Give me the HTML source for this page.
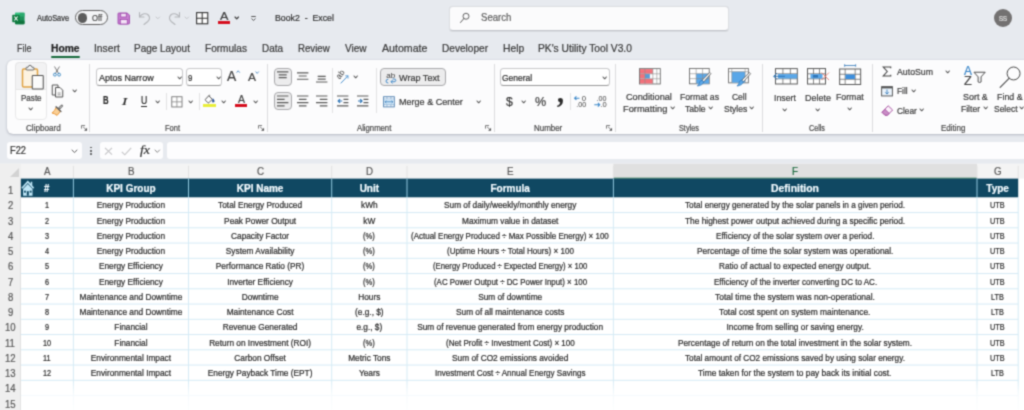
<!DOCTYPE html>
<html lang="en"><head><meta charset="utf-8"><title>Book2 - Excel</title>
<style>
html,body{margin:0;padding:0;background:#e7eaef;}
body{position:relative;width:1024px;height:410px;overflow:hidden;font-family:"Liberation Sans",sans-serif;}
#app{position:absolute;left:0;top:0;width:1040px;height:426px;overflow:hidden;background:#e7eaef;filter:url(#soft);}
.b{position:absolute;box-sizing:border-box;display:block;}
svg{overflow:visible;}
.t{-webkit-text-stroke:0.22px currentColor;position:absolute;white-space:pre;transform-origin:0 50%;display:block;}
</style></head><body><svg width="0" height="0" style="position:absolute" aria-hidden="true"><defs><filter id="soft" x="0" y="0" width="100%" height="100%" color-interpolation-filters="sRGB"><feConvolveMatrix order="3" kernelMatrix="0.090 0.300 0.090 0.300 1.000 0.300 0.090 0.300 0.090" divisor="2.560" edgeMode="duplicate" preserveAlpha="true"/></filter></defs></svg><div id="app">
<!-- title bar -->
<svg class="b" style="left:11.50px;top:11.50px;" width="13.00" height="13.00" viewBox="0 0 26 26"><rect x="6" y="1.5" width="19" height="23" rx="2" fill="#21a366"/><rect x="6" y="1.5" width="19" height="7.7" fill="#33c481"/><rect x="6" y="16.8" width="19" height="7.7" rx="2" fill="#107c41"/><rect x="15.5" y="1.5" width="9.5" height="23" fill="#185c37" opacity=".25"/><rect x="0.5" y="5.5" width="15" height="15" rx="1.6" fill="#107c41"/><path d="M4.6 9 L11.4 17 M11.4 9 L4.6 17" stroke="#fff" stroke-width="2.1" fill="none"/></svg>
<span class="t" style="left:37.20px;top:13.52px;font-size:8.30px;line-height:9.96px;color:#333;transform:scaleX(0.8891);">AutoSave</span>
<div class="b" style="left:74.50px;top:10.20px;width:33.20px;height:15.20px;border:1px solid #616161;border-radius:8px;background:#f3f4f6;"></div>
<div class="b" style="left:77.80px;top:12.90px;width:9.70px;height:9.80px;border-radius:50%;background:#5c5c5c;"></div>
<span class="t" style="left:92.10px;top:13.46px;font-size:8.40px;line-height:10.08px;color:#505050;transform:scaleX(0.9141);">Off</span>
<svg class="b" style="left:116.50px;top:11.50px;" width="13.50" height="13.00" viewBox="0 0 27 26"><path d="M2 3.5 Q2 2 3.5 2 H20.5 L25 6.5 V22.5 Q25 24 23.5 24 H3.5 Q2 24 2 22.5 Z" fill="#c77fd0" stroke="#9b3fa8" stroke-width="1.6"/><rect x="7.5" y="2.5" width="11" height="7.5" fill="#f3e3f6" stroke="#9b3fa8" stroke-width="1.5"/><rect x="6.5" y="15" width="14" height="9" fill="#f3e3f6" stroke="#9b3fa8" stroke-width="1.5"/></svg>
<svg class="b" style="left:138.00px;top:11.00px;" width="14.00" height="14.00" viewBox="0 0 28 28"><path d="M3 3 V12 H12" fill="none" stroke="#b3b5b9" stroke-width="2.2" stroke-linecap="round" stroke-linejoin="round"/><path d="M3.5 11.5 C8 5 16 3.5 20.5 8 C25 12.5 23 18 19 21.5 L12 27" fill="none" stroke="#b3b5b9" stroke-width="2.2" stroke-linecap="round"/></svg>
<svg class="b" style="left:154.70px;top:16.10px;" width="5.60" height="3.80" viewBox="-2.80 -1.90 5.60 3.80"><path d="M-1.80 -0.90 L0 0.90 L1.80 -0.90" fill="none" stroke="#c3c5c9" stroke-width="1.00" stroke-linecap="round" stroke-linejoin="round"/></svg>
<svg class="b" style="left:166.50px;top:11.00px;" width="14.00" height="14.00" viewBox="0 0 28 28"><path d="M25 3 V12 H16" fill="none" stroke="#b3b5b9" stroke-width="2.2" stroke-linecap="round" stroke-linejoin="round"/><path d="M24.5 11.5 C20 5 12 3.5 7.500 8 C3 12.5 5 18 9 21.5 L16 27" fill="none" stroke="#b3b5b9" stroke-width="2.2" stroke-linecap="round"/></svg>
<svg class="b" style="left:184.20px;top:16.10px;" width="5.60" height="3.80" viewBox="-2.80 -1.90 5.60 3.80"><path d="M-1.80 -0.90 L0 0.90 L1.80 -0.90" fill="none" stroke="#c3c5c9" stroke-width="1.00" stroke-linecap="round" stroke-linejoin="round"/></svg>
<svg class="b" style="left:196.00px;top:11.70px;" width="12.40" height="12.40" viewBox="0 0 24 24"><rect x="1.2" y="1.2" width="21.6" height="21.6" fill="#fdfdfd" stroke="#333" stroke-width="2.1"/><path d="M12 1 V23 M1 12 H23" stroke="#333" stroke-width="2"/></svg>
<span class="t" style="left:220.30px;top:9.80px;font-size:11.00px;line-height:13.20px;color:#3f3f3f;transform:scaleX(1.1448);">A</span>
<div class="b" style="left:217.80px;top:21.20px;width:12.40px;height:2.60px;background:#d60f1f;"></div>
<svg class="b" style="left:234.25px;top:15.65px;" width="5.50" height="3.90" viewBox="-2.75 -1.95 5.50 3.90"><path d="M-1.75 -0.95 L0 0.95 L1.75 -0.95" fill="none" stroke="#3a3a3a" stroke-width="1.15" stroke-linecap="round" stroke-linejoin="round"/></svg>
<svg class="b" style="left:249.50px;top:15.00px;" width="7.00" height="7.00" viewBox="0 0 14 14"><path d="M2.5 3 H11.5" stroke="#444" stroke-width="1.8"/><path d="M3 7 L7 11 L11 7" fill="none" stroke="#444" stroke-width="1.8" stroke-linejoin="round"/></svg>
<span class="t" style="left:274.50px;top:12.78px;font-size:9.20px;line-height:11.04px;color:#333;transform:scaleX(0.9536);">Book2  -  Excel</span>
<div class="b" style="left:449.20px;top:6.00px;width:279.40px;height:24.60px;background:#fbfbfc;border-radius:4px;border:1px solid #dcdee2;border-bottom-color:#c2c5cb;box-shadow:0 .5px 1px rgba(0,0,0,.07);"></div>
<svg class="b" style="left:459.00px;top:11.00px;" width="12.00" height="14.00" viewBox="0 0 24 28"><circle cx="14" cy="10.5" r="6" fill="none" stroke="#555" stroke-width="1.8"/><path d="M9.8 15 L3 23" stroke="#555" stroke-width="1.9" stroke-linecap="round"/></svg>
<span class="t" style="left:481.00px;top:12.28px;font-size:10.20px;line-height:12.24px;color:#626262;transform:scaleX(0.9437);">Search</span>
<div class="b" style="left:993.60px;top:8.90px;width:18.10px;height:18.10px;border-radius:50%;background:#737171;"></div>
<span class="t" style="left:998.60px;top:15.24px;font-size:6.60px;line-height:7.92px;color:#e4e4e4;transform:scaleX(0.9086);">SS</span>
<!-- tabs -->
<span class="t" style="left:16.50px;top:43.48px;font-size:10.20px;line-height:12.24px;color:#3b3b3b;transform:scaleX(0.8822);">File</span>
<span class="t" style="left:51.00px;top:43.48px;font-size:10.20px;line-height:12.24px;color:#1f1f1f;transform:scaleX(1.0092);font-weight:bold;">Home</span>
<span class="t" style="left:93.50px;top:43.48px;font-size:10.20px;line-height:12.24px;color:#3b3b3b;transform:scaleX(1.0114);">Insert</span>
<span class="t" style="left:134.00px;top:43.48px;font-size:10.20px;line-height:12.24px;color:#3b3b3b;transform:scaleX(0.9776);">Page Layout</span>
<span class="t" style="left:205.00px;top:43.48px;font-size:10.20px;line-height:12.24px;color:#3b3b3b;transform:scaleX(0.9880);">Formulas</span>
<span class="t" style="left:262.00px;top:43.48px;font-size:10.20px;line-height:12.24px;color:#3b3b3b;transform:scaleX(0.9747);">Data</span>
<span class="t" style="left:298.00px;top:43.48px;font-size:10.20px;line-height:12.24px;color:#3b3b3b;transform:scaleX(0.9478);">Review</span>
<span class="t" style="left:345.00px;top:43.48px;font-size:10.20px;line-height:12.24px;color:#3b3b3b;transform:scaleX(0.9852);">View</span>
<span class="t" style="left:381.50px;top:43.48px;font-size:10.20px;line-height:12.24px;color:#3b3b3b;transform:scaleX(1.0421);">Automate</span>
<span class="t" style="left:441.50px;top:43.48px;font-size:10.20px;line-height:12.24px;color:#3b3b3b;transform:scaleX(0.9915);">Developer</span>
<span class="t" style="left:502.50px;top:43.48px;font-size:10.20px;line-height:12.24px;color:#3b3b3b;transform:scaleX(1.0153);">Help</span>
<span class="t" style="left:538.00px;top:43.48px;font-size:10.20px;line-height:12.24px;color:#3b3b3b;transform:scaleX(1.0043);">PK&#x27;s Utility Tool V3.0</span>
<div class="b" style="left:51.20px;top:55.60px;width:28.50px;height:2.00px;background:#176a3c;border-radius:1px;"></div>
<!-- ribbon -->
<div class="b" style="left:6.50px;top:60.20px;width:1033.50px;height:74.10px;background:#fcfcfd;border-radius:6px;box-shadow:0 1px 2.5px rgba(60,70,90,.28),0 0 1px rgba(60,70,90,.25);"></div>
<div class="b" style="left:15.40px;top:62.00px;width:31.30px;height:58.20px;border:1px solid #e9e9ea;border-radius:4px;background:#fdfdfd;"></div>
<div class="b" style="left:15.40px;top:62.00px;width:31.30px;height:28.00px;border:1px solid #e6e6e7;border-radius:4px 4px 0 0;background:#f2f2f3;"></div>
<svg class="b" style="left:21.00px;top:64.50px;" width="23.50" height="25.50" viewBox="0 0 47 51"><rect x="3" y="8" width="30" height="36" rx="2.5" fill="#fdf3e1" stroke="#e0a243" stroke-width="3"/><path d="M10 8 V6 Q10 4.5 11.5 4.5 H14 Q15 0.500 18 0.500 Q21 0.500 22 4.5 H24.5 Q26 4.5 26 6 V8 Q26 10 24 10 H12 Q10 10 10 8 Z" fill="#f4f4f4" stroke="#6a6a6a" stroke-width="2"/><rect x="22.5" y="21" width="22" height="27" rx="1.5" fill="#fbfbfb" stroke="#555" stroke-width="2.1"/></svg>
<span class="t" style="left:20.60px;top:91.80px;font-size:9.50px;line-height:11.40px;color:#3a3a3a;transform:scaleX(0.8480);">Paste</span>
<svg class="b" style="left:28.10px;top:107.20px;" width="5.40" height="3.80" viewBox="-2.70 -1.90 5.40 3.80"><path d="M-1.70 -0.90 L0 0.90 L1.70 -0.90" fill="none" stroke="#505050" stroke-width="1.05" stroke-linecap="round" stroke-linejoin="round"/></svg>
<svg class="b" style="left:53.20px;top:66.40px;" width="8.00" height="11.40" viewBox="0 0 19 25"><path d="M4 1 L13.5 17 M15 1 L5.500 17" stroke="#4a4a4a" stroke-width="1.7" fill="none" stroke-linecap="round"/><circle cx="4.500" cy="19.500" r="3.400" fill="none" stroke="#3d8ac4" stroke-width="2.300"/><circle cx="14.500" cy="19.500" r="3.400" fill="none" stroke="#3d8ac4" stroke-width="2.300"/></svg>
<svg class="b" style="left:50.50px;top:83.50px;" width="13.00" height="14.00" viewBox="0 0 26 28"><path d="M8 22 H2.5 V2 H14 V6" fill="none" stroke="#555" stroke-width="2"/><path d="M9 7 H18 L23.5 12.5 V26 H9 Z" fill="#fbfbfb" stroke="#555" stroke-width="2"/><path d="M13 18 H19.5 M13 21.5 H19.5" stroke="#777" stroke-width="1.4"/></svg>
<svg class="b" style="left:72.10px;top:88.90px;" width="5.40" height="3.80" viewBox="-2.70 -1.90 5.40 3.80"><path d="M-1.70 -0.90 L0 0.90 L1.70 -0.90" fill="none" stroke="#505050" stroke-width="1.05" stroke-linecap="round" stroke-linejoin="round"/></svg>
<svg class="b" style="left:51.20px;top:103.60px;" width="12.60" height="12.20" viewBox="0 0 26 25"><path d="M17.500 8.500 L22.500 3.500" stroke="#5a5a5a" stroke-width="5" stroke-linecap="round"/><path d="M17.800 8.200 L22.300 3.700" stroke="#f4f4f4" stroke-width="2" stroke-linecap="round"/><path d="M11 6.500 L19.500 15 L12.500 23.500 Q8 19.500 2 18.500 Q8 14 11 6.500 Z" fill="#f9cf95" stroke="#e8912d" stroke-width="1.9" stroke-linejoin="round"/><path d="M10.500 5.500 L20.500 15.500" stroke="#5a5a5a" stroke-width="2.600" stroke-linecap="round"/></svg>
<span class="t" style="left:25.60px;top:122.56px;font-size:8.40px;line-height:10.08px;color:#4a4a4a;transform:scaleX(0.9706);">Clipboard</span>
<svg class="b" style="left:81.00px;top:125.20px;" width="6.60" height="6.20" viewBox="0 0 13 12"><path d="M1 7 V1 H8" fill="none" stroke="#555" stroke-width="1.5"/><path d="M6 11 H12 V5.5 Z" fill="#555"/><path d="M4 3.5 L9.5 8.5" stroke="#555" stroke-width="1.5"/></svg>
<div class="b" style="left:89.00px;top:64.00px;width:1.00px;height:68.00px;background:#dcdcde;"></div>
<div class="b" style="left:96.30px;top:68.30px;width:87.00px;height:18.10px;border:1px solid #c9c9cb;border-bottom-color:#9a9a9a;border-radius:3.5px;background:#fff;"></div>
<span class="t" style="left:99.00px;top:71.74px;font-size:9.60px;line-height:11.52px;color:#2b2b2b;transform:scaleX(0.9406);">Aptos Narrow</span>
<svg class="b" style="left:176.60px;top:75.60px;" width="5.40" height="3.80" viewBox="-2.70 -1.90 5.40 3.80"><path d="M-1.70 -0.90 L0 0.90 L1.70 -0.90" fill="none" stroke="#505050" stroke-width="1.05" stroke-linecap="round" stroke-linejoin="round"/></svg>
<div class="b" style="left:185.60px;top:68.30px;width:36.90px;height:18.10px;border:1px solid #c9c9cb;border-bottom-color:#9a9a9a;border-radius:3.5px;background:#fff;"></div>
<span class="t" style="left:187.80px;top:71.74px;font-size:9.60px;line-height:11.52px;color:#2b2b2b;transform:scaleX(0.8241);">9</span>
<svg class="b" style="left:215.70px;top:75.60px;" width="5.40" height="3.80" viewBox="-2.70 -1.90 5.40 3.80"><path d="M-1.70 -0.90 L0 0.90 L1.70 -0.90" fill="none" stroke="#505050" stroke-width="1.05" stroke-linecap="round" stroke-linejoin="round"/></svg>
<span class="t" style="left:227.40px;top:68.20px;font-size:14.00px;line-height:16.80px;color:#444;transform:scaleX(0.9852);">A</span>
<svg class="b" style="left:235.60px;top:70.40px;" width="4.40" height="3.20" viewBox="0 0 8 6"><path d="M1 5 L4 1.500 L7 5" fill="none" stroke="#2e75b6" stroke-width="1.4"/></svg>
<span class="t" style="left:248.00px;top:70.80px;font-size:11.50px;line-height:13.80px;color:#444;transform:scaleX(1.0429);">A</span>
<svg class="b" style="left:254.60px;top:71.40px;" width="4.40" height="3.20" viewBox="0 0 8 6"><path d="M1 1 L4 4.500 L7 1" fill="none" stroke="#2e75b6" stroke-width="1.4"/></svg>
<span class="t" style="left:102.60px;top:95.28px;font-size:10.20px;line-height:12.24px;color:#2b2b2b;transform:scaleX(0.7602);font-weight:bold;">B</span>
<span class="t" style="left:122.40px;top:94.56px;font-size:11.40px;line-height:13.68px;color:#2b2b2b;transform:scaleX(1.3696);font-style:italic;font-family:'Liberation Serif',serif;">I</span>
<span class="t" style="left:141.00px;top:95.20px;font-size:10.00px;line-height:12.00px;color:#2b2b2b;transform:scaleX(0.8723);">U</span>
<div class="b" style="left:141.00px;top:105.60px;width:6.30px;height:0.90px;background:#2b2b2b;"></div>
<svg class="b" style="left:155.30px;top:99.70px;" width="5.40" height="3.80" viewBox="-2.70 -1.90 5.40 3.80"><path d="M-1.70 -0.90 L0 0.90 L1.70 -0.90" fill="none" stroke="#505050" stroke-width="1.05" stroke-linecap="round" stroke-linejoin="round"/></svg>
<div class="b" style="left:165.90px;top:93.00px;width:1.00px;height:17.00px;background:#e2e2e4;"></div>
<svg class="b" style="left:171.00px;top:95.70px;" width="11.80" height="11.70" viewBox="0 0 24 24"><rect x="1.500" y="1.500" width="21" height="21" fill="#fff" stroke="#777" stroke-width="1.9"/><path d="M12 1.500 V22.5 M1.500 12 H22.5" stroke="#8a8a8a" stroke-width="1.7"/></svg>
<svg class="b" style="left:188.30px;top:99.70px;" width="5.40" height="3.80" viewBox="-2.70 -1.90 5.40 3.80"><path d="M-1.70 -0.90 L0 0.90 L1.70 -0.90" fill="none" stroke="#505050" stroke-width="1.05" stroke-linecap="round" stroke-linejoin="round"/></svg>
<div class="b" style="left:198.80px;top:93.00px;width:1.00px;height:17.00px;background:#e2e2e4;"></div>
<svg class="b" style="left:204.00px;top:94.00px;" width="12.00" height="11.00" viewBox="0 0 24 22"><path d="M9.500 3.500 L16.500 10.500 L9.800 17.500 Q8.800 18.300 7.800 17.500 L3 12.500 Q2.200 11.500 3 10.500 Z" fill="#fdfdfd" stroke="#505050" stroke-width="1.900" stroke-linejoin="round"/><path d="M9.500 3.500 Q10.500 0.800 12.500 3" fill="none" stroke="#505050" stroke-width="1.500"/><path d="M17.800 8.500 Q22.500 13.500 20.500 16.200 Q18.500 18 16.300 16 Q15 13.500 17.800 8.500 Z" fill="#2f5597"/></svg>
<div class="b" style="left:203.10px;top:104.40px;width:13.40px;height:3.00px;background:#e9ee3a;"></div>
<svg class="b" style="left:221.30px;top:99.70px;" width="5.40" height="3.80" viewBox="-2.70 -1.90 5.40 3.80"><path d="M-1.70 -0.90 L0 0.90 L1.70 -0.90" fill="none" stroke="#505050" stroke-width="1.05" stroke-linecap="round" stroke-linejoin="round"/></svg>
<span class="t" style="left:237.80px;top:93.06px;font-size:11.40px;line-height:13.68px;color:#444;transform:scaleX(0.9205);">A</span>
<div class="b" style="left:234.80px;top:104.40px;width:12.50px;height:3.00px;background:#d60f1f;"></div>
<svg class="b" style="left:252.60px;top:99.70px;" width="5.40" height="3.80" viewBox="-2.70 -1.90 5.40 3.80"><path d="M-1.70 -0.90 L0 0.90 L1.70 -0.90" fill="none" stroke="#505050" stroke-width="1.05" stroke-linecap="round" stroke-linejoin="round"/></svg>
<span class="t" style="left:165.00px;top:122.56px;font-size:8.40px;line-height:10.08px;color:#4a4a4a;transform:scaleX(0.8924);">Font</span>
<svg class="b" style="left:258.40px;top:125.20px;" width="6.60" height="6.20" viewBox="0 0 13 12"><path d="M1 7 V1 H8" fill="none" stroke="#555" stroke-width="1.5"/><path d="M6 11 H12 V5.5 Z" fill="#555"/><path d="M4 3.5 L9.5 8.5" stroke="#555" stroke-width="1.5"/></svg>
<div class="b" style="left:267.10px;top:64.00px;width:1.00px;height:68.00px;background:#dcdcde;"></div>
<div class="b" style="left:273.80px;top:68.20px;width:17.80px;height:18.10px;border:1.1px solid #a9a9ab;border-radius:4px;background:#ececed;"></div>
<div class="b" style="left:273.80px;top:92.40px;width:17.80px;height:18.10px;border:1.1px solid #a9a9ab;border-radius:4px;background:#ececed;"></div>
<svg class="b" style="left:276.60px;top:71.20px;" width="12.00" height="12.00" viewBox="0 0 12 12"><path d="M0.00 0.80 H11.40 M1.70 3.80 H9.70 M1.70 6.60 H9.70 " stroke="#5a5a5a" stroke-width="1.15" fill="none"/></svg>
<svg class="b" style="left:296.80px;top:70.40px;" width="12.00" height="12.00" viewBox="0 0 12 12"><path d="M0.00 2.80 H11.40 M1.70 6.00 H9.70 M0.00 9.20 H11.40 " stroke="#5a5a5a" stroke-width="1.15" fill="none"/></svg>
<svg class="b" style="left:316.20px;top:71.20px;" width="12.00" height="12.00" viewBox="0 0 12 12"><path d="M1.70 5.30 H9.70 M1.70 8.10 H9.70 M0.00 11.00 H11.40 " stroke="#5a5a5a" stroke-width="1.15" fill="none"/></svg>
<svg class="b" style="left:276.90px;top:95.00px;" width="12.00" height="12.00" viewBox="0 0 12 12"><path d="M0.00 1.00 H11.40 M0.00 4.30 H7.60 M0.00 7.60 H11.40 M0.00 10.90 H7.60 " stroke="#5a5a5a" stroke-width="1.15" fill="none"/></svg>
<svg class="b" style="left:296.80px;top:95.00px;" width="12.00" height="12.00" viewBox="0 0 12 12"><path d="M0.00 1.00 H11.40 M1.90 4.30 H9.50 M0.00 7.60 H11.40 M1.90 10.90 H9.50 " stroke="#5a5a5a" stroke-width="1.15" fill="none"/></svg>
<svg class="b" style="left:316.20px;top:95.00px;" width="12.00" height="12.00" viewBox="0 0 12 12"><path d="M0.00 1.00 H11.40 M3.80 4.30 H11.40 M0.00 7.60 H11.40 M3.80 10.90 H11.40 " stroke="#5a5a5a" stroke-width="1.15" fill="none"/></svg>
<div class="b" style="left:332.30px;top:68.00px;width:1.00px;height:45.00px;background:#e2e2e4;"></div>
<svg class="b" style="left:336.40px;top:69.60px;" width="13.00" height="13.60" viewBox="0 0 26 27"><path d="M10 26 L23.500 12" stroke="#4f94d0" stroke-width="2" stroke-linecap="round"/><path d="M18.500 11.500 L24 11.500 L24 17" fill="none" stroke="#4f94d0" stroke-width="1.700"/><text x="0" y="0" font-family="Liberation Sans, sans-serif" font-size="16.500" fill="#3a3a3a" transform="translate(7.500 19.500) rotate(-55)">ab</text></svg>
<svg class="b" style="left:353.20px;top:74.60px;" width="5.40" height="3.80" viewBox="-2.70 -1.90 5.40 3.80"><path d="M-1.70 -0.90 L0 0.90 L1.70 -0.90" fill="none" stroke="#505050" stroke-width="1.05" stroke-linecap="round" stroke-linejoin="round"/></svg>
<svg class="b" style="left:337.00px;top:95.00px;" width="12.00" height="12.00" viewBox="0 0 12 12"><path d="M0 1 H11.4 M6.500 4.300 H11.4 M6.500 7.600 H11.4 M0 10.900 H11.4" stroke="#5a5a5a" stroke-width="1.15" fill="none"/><path d="M1.2 6 H5.2 M3 4.200 L1.200 6 L3 7.800" stroke="#2e75b6" stroke-width="1.2" fill="none"/></svg>
<svg class="b" style="left:356.60px;top:95.00px;" width="12.00" height="12.00" viewBox="0 0 12 12"><path d="M0 1 H11.4 M6.500 4.300 H11.4 M6.500 7.600 H11.4 M0 10.900 H11.4" stroke="#5a5a5a" stroke-width="1.15" fill="none"/><path d="M1 6 H5 M3.2 4.200 L5 6 L3.200 7.800" stroke="#2e75b6" stroke-width="1.2" fill="none"/></svg>
<div class="b" style="left:375.90px;top:68.00px;width:1.00px;height:45.00px;background:#e2e2e4;"></div>
<div class="b" style="left:380.40px;top:68.20px;width:65.60px;height:18.10px;border:1.1px solid #a9a9ab;border-radius:4px;background:#ececed;"></div>
<svg class="b" style="left:384.60px;top:71.60px;" width="11.60" height="12.00" viewBox="0 0 23 24"><text x="2.500" y="11" font-family="Liberation Sans, sans-serif" font-size="15.5" fill="#3f3f3f" textLength="18" lengthAdjust="spacingAndGlyphs">ab</text><path d="M6.500 14.500 Q2 14.500 2 18.200 Q2 22 6.500 22" fill="none" stroke="#3a86c8" stroke-width="1.9"/><path d="M12 19.500 H18 Q21.500 19.500 21.500 16.700 Q21.500 14 18 14 H15" fill="none" stroke="#3a86c8" stroke-width="1.9"/><path d="M15 16.200 L11.700 19.500 L15 22.800" fill="none" stroke="#3a86c8" stroke-width="1.9"/></svg>
<span class="t" style="left:398.90px;top:71.72px;font-size:9.80px;line-height:11.76px;color:#3a3a3a;transform:scaleX(0.9256);">Wrap Text</span>
<svg class="b" style="left:383.30px;top:95.60px;" width="11.90" height="11.60" viewBox="0 0 24 23"><rect x="1.200" y="1.200" width="21.6" height="20.6" fill="#f4f9fd" stroke="#4f7fae" stroke-width="1.8"/><path d="M1 6 H23 M1 17 H23 M8 1 V6 M16 1 V6 M8 17 V22 M16 17 V22" stroke="#6f9cc6" stroke-width="1.3"/><rect x="2.200" y="6.700" width="19.6" height="9.600" fill="#cfe6f8"/><path d="M4 11.500 H20 M6.500 9 L4 11.500 L6.500 14 M17.500 9 L20 11.500 L17.500 14" stroke="#2e75b6" stroke-width="1.5" fill="none"/></svg>
<span class="t" style="left:398.90px;top:95.72px;font-size:9.80px;line-height:11.76px;color:#3a3a3a;transform:scaleX(0.9237);">Merge &amp; Center</span>
<svg class="b" style="left:475.50px;top:99.90px;" width="5.40" height="3.80" viewBox="-2.70 -1.90 5.40 3.80"><path d="M-1.70 -0.90 L0 0.90 L1.70 -0.90" fill="none" stroke="#505050" stroke-width="1.05" stroke-linecap="round" stroke-linejoin="round"/></svg>
<span class="t" style="left:357.30px;top:122.56px;font-size:8.40px;line-height:10.08px;color:#4a4a4a;transform:scaleX(0.9209);">Alignment</span>
<svg class="b" style="left:485.00px;top:125.20px;" width="6.60" height="6.20" viewBox="0 0 13 12"><path d="M1 7 V1 H8" fill="none" stroke="#555" stroke-width="1.5"/><path d="M6 11 H12 V5.5 Z" fill="#555"/><path d="M4 3.5 L9.5 8.5" stroke="#555" stroke-width="1.5"/></svg>
<div class="b" style="left:493.70px;top:64.00px;width:1.00px;height:68.00px;background:#dcdcde;"></div>
<div class="b" style="left:500.00px;top:68.30px;width:109.50px;height:18.10px;border:1px solid #c9c9cb;border-bottom-color:#9a9a9a;border-radius:3.5px;background:#fff;"></div>
<span class="t" style="left:502.20px;top:71.84px;font-size:9.60px;line-height:11.52px;color:#2b2b2b;transform:scaleX(0.8813);">General</span>
<svg class="b" style="left:601.70px;top:75.60px;" width="5.40" height="3.80" viewBox="-2.70 -1.90 5.40 3.80"><path d="M-1.70 -0.90 L0 0.90 L1.70 -0.90" fill="none" stroke="#505050" stroke-width="1.05" stroke-linecap="round" stroke-linejoin="round"/></svg>
<span class="t" style="left:505.80px;top:94.58px;font-size:12.20px;line-height:14.64px;color:#3a3a3a;transform:scaleX(1.0022);">$</span>
<svg class="b" style="left:520.70px;top:99.90px;" width="5.40" height="3.80" viewBox="-2.70 -1.90 5.40 3.80"><path d="M-1.70 -0.90 L0 0.90 L1.70 -0.90" fill="none" stroke="#505050" stroke-width="1.05" stroke-linecap="round" stroke-linejoin="round"/></svg>
<span class="t" style="left:534.80px;top:93.54px;font-size:13.60px;line-height:16.32px;color:#3f3f3f;transform:scaleX(0.9262);">%</span>
<span class="t" style="left:557.00px;top:74.20px;font-size:30.00px;line-height:36.00px;color:#2b2b2b;transform:scaleX(0.9333);font-weight:bold;font-family:'Liberation Serif',serif;">,</span>
<div class="b" style="left:569.50px;top:93.00px;width:1.00px;height:17.00px;background:#e2e2e4;"></div>
<svg class="b" style="left:574.40px;top:95.20px;" width="12.60" height="12.60" viewBox="0 0 22 22"><path d="M1 5.500 H9.500 M4.200 2.300 L1 5.500 L4.200 8.700" fill="none" stroke="#3a86c8" stroke-width="1.8"/><text x="13.500" y="10" font-size="13.5" font-family="Liberation Sans, sans-serif" fill="#3f3f3f">0</text><text x="4" y="21.500" font-size="13.5" font-family="Liberation Sans, sans-serif" fill="#3f3f3f" textLength="17.500" lengthAdjust="spacingAndGlyphs">.00</text></svg>
<svg class="b" style="left:594.30px;top:95.20px;" width="12.60" height="12.60" viewBox="0 0 22 22"><text x="4.500" y="10" font-size="13.5" font-family="Liberation Sans, sans-serif" fill="#3f3f3f" textLength="17.500" lengthAdjust="spacingAndGlyphs">.00</text><path d="M0.500 17 H10 M6.800 13.800 L10 17 L6.800 20.200" fill="none" stroke="#3a86c8" stroke-width="1.8"/><text x="11" y="21.500" font-size="13.5" font-family="Liberation Sans, sans-serif" fill="#3f3f3f" textLength="11" lengthAdjust="spacingAndGlyphs">.0</text></svg>
<span class="t" style="left:533.70px;top:122.56px;font-size:8.40px;line-height:10.08px;color:#4a4a4a;transform:scaleX(0.9472);">Number</span>
<svg class="b" style="left:606.00px;top:125.20px;" width="6.60" height="6.20" viewBox="0 0 13 12"><path d="M1 7 V1 H8" fill="none" stroke="#555" stroke-width="1.5"/><path d="M6 11 H12 V5.5 Z" fill="#555"/><path d="M4 3.5 L9.5 8.5" stroke="#555" stroke-width="1.5"/></svg>
<div class="b" style="left:614.60px;top:64.00px;width:1.00px;height:68.00px;background:#dcdcde;"></div>
<svg class="b" style="left:638.60px;top:68.20px;" width="21.80" height="16.60" viewBox="0 0 44 33"><rect x="1" y="1" width="42" height="31" fill="#fff" stroke="#6b6b6b" stroke-width="1.8"/><rect x="2" y="2" width="26" height="9.300" fill="#f2717b"/><rect x="2" y="12" width="10" height="9" fill="#f2717b"/><rect x="12" y="12" width="10" height="9" fill="#5b9bd5"/><rect x="2" y="21.700" width="26" height="9.300" fill="#f2717b"/><path d="M1 11.500 H43 M1 21.500 H43 M12 1 V32 M28 1 V32 M36 1 V32" stroke="#8a8a8a" stroke-width="1.200" fill="none"/></svg>
<span class="t" style="left:626.00px;top:90.92px;font-size:9.80px;line-height:11.76px;color:#3a3a3a;transform:scaleX(0.9361);">Conditional</span>
<span class="t" style="left:622.70px;top:103.12px;font-size:9.80px;line-height:11.76px;color:#3a3a3a;transform:scaleX(0.9458);">Formatting</span>
<svg class="b" style="left:669.70px;top:106.30px;" width="5.40" height="3.80" viewBox="-2.70 -1.90 5.40 3.80"><path d="M-1.70 -0.90 L0 0.90 L1.70 -0.90" fill="none" stroke="#505050" stroke-width="1.05" stroke-linecap="round" stroke-linejoin="round"/></svg>
<svg class="b" style="left:689.30px;top:68.20px;" width="22.70" height="19.80" viewBox="0 0 46 40"><rect x="1" y="1" width="40" height="31" fill="#fff" stroke="#6b6b6b" stroke-width="1.8"/><rect x="14.500" y="11.500" width="26" height="20" fill="#5aa7e8"/><path d="M1 11.500 H41 M1 21.500 H41 M14.500 1 V32 M27.500 1 V32" stroke="#8a8a8a" stroke-width="1.200" fill="none"/><path d="M42 9 L44.500 11.500 L30 28 L26.500 25 Z" fill="#fbfbfb" stroke="#555" stroke-width="1.600" stroke-linejoin="round"/><path d="M26.500 25 L30 28 Q28 35 17 36.500 Q22 32 21.500 28.500 Q23 25 26.500 25 Z" fill="#5aa7e8" stroke="#2e75b6" stroke-width="1.400"/></svg>
<span class="t" style="left:680.00px;top:90.92px;font-size:9.80px;line-height:11.76px;color:#3a3a3a;transform:scaleX(0.8841);">Format as</span>
<span class="t" style="left:685.40px;top:103.12px;font-size:9.80px;line-height:11.76px;color:#3a3a3a;transform:scaleX(0.8793);">Table</span>
<svg class="b" style="left:708.30px;top:106.30px;" width="5.40" height="3.80" viewBox="-2.70 -1.90 5.40 3.80"><path d="M-1.70 -0.90 L0 0.90 L1.70 -0.90" fill="none" stroke="#505050" stroke-width="1.05" stroke-linecap="round" stroke-linejoin="round"/></svg>
<svg class="b" style="left:728.20px;top:68.20px;" width="23.40" height="19.80" viewBox="0 0 47 40"><rect x="1" y="1" width="40" height="29" fill="#fff" stroke="#6b6b6b" stroke-width="1.8"/><rect x="7.500" y="7.500" width="27" height="22" fill="#5aa7e8"/><path d="M1 7.500 H41 M7.500 1 V30 M34.500 1 V30" stroke="#8a8a8a" stroke-width="1.200" fill="none"/><path d="M43 9 L45.500 11.500 L31 28 L27.500 25 Z" fill="#fbfbfb" stroke="#555" stroke-width="1.600" stroke-linejoin="round"/><path d="M27.500 25 L31 28 Q29 35 18 36.500 Q23 32 22.500 28.500 Q24 25 27.500 25 Z" fill="#5aa7e8" stroke="#2e75b6" stroke-width="1.400"/></svg>
<span class="t" style="left:732.30px;top:90.92px;font-size:9.80px;line-height:11.76px;color:#3a3a3a;transform:scaleX(0.8648);">Cell</span>
<span class="t" style="left:723.70px;top:103.12px;font-size:9.80px;line-height:11.76px;color:#3a3a3a;transform:scaleX(0.8693);">Styles</span>
<svg class="b" style="left:749.10px;top:106.30px;" width="5.40" height="3.80" viewBox="-2.70 -1.90 5.40 3.80"><path d="M-1.70 -0.90 L0 0.90 L1.70 -0.90" fill="none" stroke="#505050" stroke-width="1.05" stroke-linecap="round" stroke-linejoin="round"/></svg>
<span class="t" style="left:678.60px;top:122.56px;font-size:8.40px;line-height:10.08px;color:#4a4a4a;transform:scaleX(0.8699);">Styles</span>
<div class="b" style="left:762.10px;top:64.00px;width:1.00px;height:68.00px;background:#dcdcde;"></div>
<svg class="b" style="left:772.60px;top:68.20px;" width="24.80" height="16.60" viewBox="-4 0 50 33"><rect x="1" y="1" width="44" height="31" fill="#fff" stroke="#5a5a5a" stroke-width="2"/><path d="M1 11.500 H45 M1 21.500 H45 M16 1 V32 M31 1 V32" stroke="#6a6a6a" stroke-width="1.600" fill="none"/><rect x="6" y="12" width="39" height="9" fill="#5aa7e8"/><path d="M-2.500 16.500 H20 M4 10 L-2.500 16.500 L4 23" fill="none" stroke="#2e75b6" stroke-width="2" stroke-linejoin="round"/></svg>
<span class="t" style="left:774.00px;top:92.32px;font-size:9.80px;line-height:11.76px;color:#3a3a3a;transform:scaleX(0.8976);">Insert</span>
<svg class="b" style="left:781.90px;top:107.90px;" width="5.40" height="3.80" viewBox="-2.70 -1.90 5.40 3.80"><path d="M-1.70 -0.90 L0 0.90 L1.70 -0.90" fill="none" stroke="#505050" stroke-width="1.05" stroke-linecap="round" stroke-linejoin="round"/></svg>
<svg class="b" style="left:806.50px;top:68.20px;" width="23.50" height="16.60" viewBox="0 0 47 33"><rect x="1" y="1" width="36" height="31" fill="#fff" stroke="#5a5a5a" stroke-width="2"/><path d="M1 11.500 H37 M1 21.500 H37 M13 1 V32 M25 1 V32" stroke="#6a6a6a" stroke-width="1.600" fill="none"/><rect x="7" y="12" width="24" height="9" fill="#5aa7e8"/><rect x="12" y="14" width="10" height="5" fill="#2e75b6"/><path d="M29 9 L44 24 M44 9 L29 24" stroke="#e5786e" stroke-width="1.800"/></svg>
<span class="t" style="left:804.70px;top:92.32px;font-size:9.80px;line-height:11.76px;color:#3a3a3a;transform:scaleX(0.9178);">Delete</span>
<svg class="b" style="left:815.10px;top:107.90px;" width="5.40" height="3.80" viewBox="-2.70 -1.90 5.40 3.80"><path d="M-1.70 -0.90 L0 0.90 L1.70 -0.90" fill="none" stroke="#505050" stroke-width="1.05" stroke-linecap="round" stroke-linejoin="round"/></svg>
<svg class="b" style="left:839.30px;top:63.80px;" width="22.30" height="21.00" viewBox="0 0 44 42"><g transform="translate(0,9)"><rect x="1" y="1" width="42" height="31" fill="#fff" stroke="#5a5a5a" stroke-width="2"/><path d="M1 11.500 H43 M1 21.500 H43 M12 1 V32 M32 1 V32" stroke="#6a6a6a" stroke-width="1.600" fill="none"/><rect x="12.500" y="12" width="19" height="9" fill="#3d8fdd"/></g><path d="M11 3 H33 M11 0.500 V5.500 M33 0.500 V5.500" stroke="#2e75b6" stroke-width="1.600"/></svg>
<span class="t" style="left:836.20px;top:91.32px;font-size:9.80px;line-height:11.76px;color:#3a3a3a;transform:scaleX(0.8925);">Format</span>
<svg class="b" style="left:846.80px;top:106.50px;" width="5.40" height="3.80" viewBox="-2.70 -1.90 5.40 3.80"><path d="M-1.70 -0.90 L0 0.90 L1.70 -0.90" fill="none" stroke="#505050" stroke-width="1.05" stroke-linecap="round" stroke-linejoin="round"/></svg>
<span class="t" style="left:809.00px;top:122.56px;font-size:8.40px;line-height:10.08px;color:#4a4a4a;transform:scaleX(0.8569);">Cells</span>
<div class="b" style="left:871.80px;top:64.00px;width:1.00px;height:68.00px;background:#dcdcde;"></div>
<svg class="b" style="left:882.30px;top:65.80px;" width="10.00" height="11.00" viewBox="0 0 20 22"><path d="M17.500 4.500 V2 H2.500 L10.500 11 L2.500 20 H17.500 V17.500" fill="none" stroke="#444" stroke-width="2.200" stroke-linejoin="miter"/></svg>
<span class="t" style="left:897.00px;top:65.72px;font-size:9.80px;line-height:11.76px;color:#3a3a3a;transform:scaleX(0.8930);">AutoSum</span>
<svg class="b" style="left:945.30px;top:69.70px;" width="5.40" height="3.80" viewBox="-2.70 -1.90 5.40 3.80"><path d="M-1.70 -0.90 L0 0.90 L1.70 -0.90" fill="none" stroke="#505050" stroke-width="1.05" stroke-linecap="round" stroke-linejoin="round"/></svg>
<svg class="b" style="left:881.20px;top:85.60px;" width="12.00" height="10.60" viewBox="0 0 24 21"><rect x="1.200" y="1.200" width="21.600" height="18.600" fill="#eaf3fb" stroke="#555" stroke-width="1.9"/><rect x="1.200" y="1.200" width="21.600" height="3.5" fill="#555"/><path d="M12 7 V16 M8.500 12.500 L12 16 L15.500 12.500" fill="none" stroke="#2e75b6" stroke-width="1.7"/></svg>
<span class="t" style="left:897.00px;top:85.42px;font-size:9.80px;line-height:11.76px;color:#3a3a3a;transform:scaleX(0.8467);">Fill</span>
<svg class="b" style="left:911.10px;top:88.50px;" width="5.40" height="3.80" viewBox="-2.70 -1.90 5.40 3.80"><path d="M-1.70 -0.90 L0 0.90 L1.70 -0.90" fill="none" stroke="#505050" stroke-width="1.05" stroke-linecap="round" stroke-linejoin="round"/></svg>
<svg class="b" style="left:881.00px;top:104.80px;" width="12.40" height="11.00" viewBox="0 0 25 22"><path d="M14.500 1.500 L23.500 10 L13 20.500 H8 L2 14.500 Z" fill="#fbf1fa" stroke="#a0479a" stroke-width="1.800" stroke-linejoin="round"/><path d="M8 8.500 L17 17 L13 20.500 H8 L2 14.500 Z" fill="#c98cc6" stroke="#a0479a" stroke-width="1.400" stroke-linejoin="round"/></svg>
<span class="t" style="left:897.00px;top:104.52px;font-size:9.80px;line-height:11.76px;color:#3a3a3a;transform:scaleX(0.8454);">Clear</span>
<svg class="b" style="left:919.30px;top:108.00px;" width="5.40" height="3.80" viewBox="-2.70 -1.90 5.40 3.80"><path d="M-1.70 -0.90 L0 0.90 L1.70 -0.90" fill="none" stroke="#505050" stroke-width="1.05" stroke-linecap="round" stroke-linejoin="round"/></svg>
<span class="t" style="left:964.20px;top:63.76px;font-size:12.40px;line-height:14.88px;color:#3a86c8;transform:scaleX(0.9672);">A</span>
<span class="t" style="left:964.40px;top:73.42px;font-size:12.80px;line-height:15.36px;color:#444;transform:scaleX(0.9976);">Z</span>
<svg class="b" style="left:973.40px;top:70.60px;" width="13.20" height="13.20" viewBox="0 0 27 27"><path d="M2 2.500 H25 L16.500 12 V22.500 Q13.500 24.500 10.500 22.500 V12 Z" fill="none" stroke="#4a4a4a" stroke-width="2" stroke-linejoin="round"/></svg>
<span class="t" style="left:962.50px;top:90.92px;font-size:9.80px;line-height:11.76px;color:#3a3a3a;transform:scaleX(0.9107);">Sort &amp;</span>
<span class="t" style="left:961.00px;top:103.12px;font-size:9.80px;line-height:11.76px;color:#3a3a3a;transform:scaleX(0.8724);">Filter</span>
<svg class="b" style="left:983.20px;top:106.30px;" width="5.40" height="3.80" viewBox="-2.70 -1.90 5.40 3.80"><path d="M-1.70 -0.90 L0 0.90 L1.70 -0.90" fill="none" stroke="#505050" stroke-width="1.05" stroke-linecap="round" stroke-linejoin="round"/></svg>
<svg class="b" style="left:998.80px;top:65.60px;" width="22.20" height="22.40" viewBox="0 0 44 45"><circle cx="29" cy="15" r="13" fill="none" stroke="#4a4a4a" stroke-width="2"/><path d="M20 25 L2 43" stroke="#4a4a4a" stroke-width="2.200" stroke-linecap="round"/></svg>
<span class="t" style="left:997.00px;top:90.92px;font-size:9.80px;line-height:11.76px;color:#3a3a3a;transform:scaleX(0.9038);">Find &amp;</span>
<span class="t" style="left:994.00px;top:103.12px;font-size:9.80px;line-height:11.76px;color:#3a3a3a;transform:scaleX(0.8628);">Select</span>
<svg class="b" style="left:1019.10px;top:106.30px;" width="5.40" height="3.80" viewBox="-2.70 -1.90 5.40 3.80"><path d="M-1.70 -0.90 L0 0.90 L1.70 -0.90" fill="none" stroke="#505050" stroke-width="1.05" stroke-linecap="round" stroke-linejoin="round"/></svg>
<span class="t" style="left:940.60px;top:122.56px;font-size:8.40px;line-height:10.08px;color:#4a4a4a;transform:scaleX(0.9578);">Editing</span>
<!-- formula bar -->
<div class="b" style="left:7.00px;top:142.40px;width:75.00px;height:16.50px;background:#fdfdfe;border-radius:3px;"></div>
<span class="t" style="left:10.30px;top:144.58px;font-size:10.20px;line-height:12.24px;color:#333;transform:scaleX(0.9103);">F22</span>
<svg class="b" style="left:70.50px;top:148.60px;" width="7.00" height="4.60" viewBox="-3.50 -2.30 7.00 4.60"><path d="M-2.50 -1.30 L0 1.30 L2.50 -1.30" fill="none" stroke="#555" stroke-width="0.90" stroke-linecap="round" stroke-linejoin="round"/></svg>
<div class="b" style="left:89.95px;top:146.90px;width:1.60px;height:1.60px;background:#555;border-radius:50%;"></div>
<div class="b" style="left:89.95px;top:150.00px;width:1.60px;height:1.60px;background:#555;border-radius:50%;"></div>
<div class="b" style="left:89.95px;top:153.10px;width:1.60px;height:1.60px;background:#555;border-radius:50%;"></div>
<div class="b" style="left:99.50px;top:142.40px;width:63.00px;height:16.50px;background:#fdfdfe;border-radius:3px;"></div>
<svg class="b" style="left:103.50px;top:146.50px;" width="9.00" height="8.50" viewBox="0 0 9 8.500"><path d="M1 0.800 L8 7.700 M8 0.800 L1 7.700" stroke="#c4c4c6" stroke-width="1.1" fill="none"/></svg>
<svg class="b" style="left:120.50px;top:146.50px;" width="11.00" height="8.50" viewBox="0 0 11 8.500"><path d="M0.800 4.800 L3.800 7.800 L10.200 0.800" stroke="#c4c4c6" stroke-width="1.1" fill="none"/></svg>
<span class="t" style="left:140.20px;top:142.70px;font-size:12.50px;line-height:15.00px;color:#333;transform:scaleX(1.1086);font-style:italic;font-family:'Liberation Serif',serif;">fx</span>
<svg class="b" style="left:154.20px;top:148.60px;" width="6.60" height="4.40" viewBox="-3.30 -2.20 6.60 4.40"><path d="M-2.30 -1.20 L0 1.20 L2.30 -1.20" fill="none" stroke="#8a8a8a" stroke-width="1.00" stroke-linecap="round" stroke-linejoin="round"/></svg>
<div class="b" style="left:167.00px;top:142.40px;width:873.00px;height:16.50px;background:#fdfdfe;border-radius:3px;"></div>
<svg class="b" style="left:0;top:0" width="1040" height="426" viewBox="0 0 1040 426"><rect x="0.00" y="163.80" width="1040.00" height="266.20" fill="#fff" /><rect x="0.00" y="163.80" width="1040.00" height="14.80" fill="#f4f4f4" /><rect x="0.00" y="163.80" width="20.90" height="266.20" fill="#efefef" /><rect x="20.30" y="178.60" width="0.60" height="251.40" fill="#d6d6d6" /><rect x="613.40" y="163.80" width="363.60" height="14.80" fill="#e0e0e0" /><rect x="613.40" y="177.70" width="363.60" height="1.00" fill="#2a7350" /><rect x="72.90" y="165.80" width="1.00" height="12.80" fill="#e2e2e2" /><rect x="188.00" y="165.80" width="1.00" height="12.80" fill="#e2e2e2" /><rect x="331.20" y="165.80" width="1.00" height="12.80" fill="#e2e2e2" /><rect x="406.50" y="165.80" width="1.00" height="12.80" fill="#e2e2e2" /><rect x="612.90" y="165.80" width="1.00" height="12.80" fill="#e2e2e2" /><rect x="976.50" y="165.80" width="1.00" height="12.80" fill="#e2e2e2" /><rect x="1017.70" y="165.80" width="1.00" height="12.80" fill="#e2e2e2" /><rect x="20.90" y="178.60" width="997.30" height="18.70" fill="#104862" /><rect x="72.90" y="178.60" width="1.00" height="18.70" fill="#8fc6dc" /><rect x="188.00" y="178.60" width="1.00" height="18.70" fill="#8fc6dc" /><rect x="331.20" y="178.60" width="1.00" height="18.70" fill="#8fc6dc" /><rect x="406.50" y="178.60" width="1.00" height="18.70" fill="#8fc6dc" /><rect x="612.90" y="178.60" width="1.00" height="18.70" fill="#8fc6dc" /><rect x="976.50" y="178.60" width="1.00" height="18.70" fill="#8fc6dc" /><rect x="20.90" y="212.05" width="997.30" height="1.00" fill="#d5ebf6" /><rect x="20.90" y="227.30" width="997.30" height="1.00" fill="#d5ebf6" /><rect x="20.90" y="242.55" width="997.30" height="1.00" fill="#d5ebf6" /><rect x="20.90" y="257.80" width="997.30" height="1.00" fill="#d5ebf6" /><rect x="20.90" y="273.05" width="997.30" height="1.00" fill="#d5ebf6" /><rect x="20.90" y="288.30" width="997.30" height="1.00" fill="#d5ebf6" /><rect x="20.90" y="303.55" width="997.30" height="1.00" fill="#d5ebf6" /><rect x="20.90" y="318.80" width="997.30" height="1.00" fill="#d5ebf6" /><rect x="20.90" y="334.05" width="997.30" height="1.00" fill="#d5ebf6" /><rect x="20.90" y="349.30" width="997.30" height="1.00" fill="#d5ebf6" /><rect x="20.90" y="364.55" width="997.30" height="1.00" fill="#d5ebf6" /><rect x="20.90" y="379.80" width="997.30" height="1.00" fill="#d5ebf6" /><rect x="20.90" y="395.05" width="997.30" height="1.00" fill="#d5ebf6" /><rect x="20.90" y="410.30" width="997.30" height="1.00" fill="#d5ebf6" /><rect x="72.90" y="197.30" width="1.00" height="232.70" fill="#d5ebf6" /><rect x="188.00" y="197.30" width="1.00" height="232.70" fill="#d5ebf6" /><rect x="331.20" y="197.30" width="1.00" height="232.70" fill="#d5ebf6" /><rect x="406.50" y="197.30" width="1.00" height="232.70" fill="#d5ebf6" /><rect x="612.90" y="197.30" width="1.00" height="232.70" fill="#d5ebf6" /><rect x="976.50" y="197.30" width="1.00" height="232.70" fill="#d5ebf6" /><rect x="1017.70" y="197.30" width="1.00" height="232.70" fill="#d5ebf6" /><defs><linearGradient id="fade" x1="0" y1="0" x2="0" y2="1"><stop offset="0" stop-color="#fff" stop-opacity="0"/><stop offset=".45" stop-color="#fff" stop-opacity=".75"/><stop offset="1" stop-color="#fff" stop-opacity=".95"/></linearGradient></defs><rect x="20.90" y="381.00" width="1019.10" height="31.00" fill="url(#fade)" /><rect x="20.90" y="412.00" width="1019.10" height="18.00" fill="#fff" fill-opacity=".95"/></svg>
<!-- sheet -->
<svg class="b" style="left:9.50px;top:167.50px;" width="9.00" height="9.00" viewBox="0 0 9 9"><path d="M9 0 V9 H0 Z" fill="#d3d3d3"/></svg>
<span class="t" style="left:43.89px;top:165.52px;font-size:10.30px;line-height:12.36px;color:#5a5a5a;transform:scaleX(0.9500);">A</span>
<span class="t" style="left:127.69px;top:165.52px;font-size:10.30px;line-height:12.36px;color:#5a5a5a;transform:scaleX(0.9500);">B</span>
<span class="t" style="left:256.57px;top:165.52px;font-size:10.30px;line-height:12.36px;color:#5a5a5a;transform:scaleX(0.9500);">C</span>
<span class="t" style="left:365.82px;top:165.52px;font-size:10.30px;line-height:12.36px;color:#5a5a5a;transform:scaleX(0.9500);">D</span>
<span class="t" style="left:506.94px;top:165.52px;font-size:10.30px;line-height:12.36px;color:#5a5a5a;transform:scaleX(0.9500);">E</span>
<span class="t" style="left:792.21px;top:165.52px;font-size:10.30px;line-height:12.36px;color:#1e6b41;transform:scaleX(0.9500);">F</span>
<span class="t" style="left:993.79px;top:165.52px;font-size:10.30px;line-height:12.36px;color:#5a5a5a;transform:scaleX(0.9500);">G</span>
<span class="t" style="left:106.23px;top:182.94px;font-size:10.00px;line-height:12.00px;color:#f4fbff;transform:scaleX(1.0000);font-weight:bold;">KPI Group</span>
<span class="t" style="left:236.76px;top:182.94px;font-size:10.00px;line-height:12.00px;color:#f4fbff;transform:scaleX(1.0000);font-weight:bold;">KPI Name</span>
<span class="t" style="left:359.63px;top:182.94px;font-size:10.00px;line-height:12.00px;color:#f4fbff;transform:scaleX(1.0000);font-weight:bold;">Unit</span>
<span class="t" style="left:490.48px;top:182.94px;font-size:10.00px;line-height:12.00px;color:#f4fbff;transform:scaleX(1.0000);font-weight:bold;">Formula</span>
<span class="t" style="left:771.23px;top:182.94px;font-size:10.00px;line-height:12.00px;color:#f4fbff;transform:scaleX(1.0400);font-weight:bold;">Definition</span>
<span class="t" style="left:986.30px;top:182.94px;font-size:10.00px;line-height:12.00px;color:#f4fbff;transform:scaleX(1.0000);font-weight:bold;">Type</span>
<span class="t" style="left:44.24px;top:182.56px;font-size:10.40px;line-height:12.48px;color:#f4fbff;transform:scaleX(0.9200);font-weight:bold;">#</span>
<svg class="b" style="left:21.40px;top:180.20px;" width="13.60" height="16.40" viewBox="0 0 27 33"><path d="M13.500 1 L0.500 15.500 L3 17.500 L13.500 6 L24 17.500 L26.500 15.500 L22.500 11 V3.500 H19.500 V7.700 Z" fill="#bfe6f7"/><path d="M13.500 8 L4 18.200 V31.500 H23 V18.200 Z" fill="#bfe6f7"/><rect x="11.500" y="22.500" width="4" height="9" fill="#104862"/><rect x="6" y="21.500" width="3.600" height="4" fill="#104862"/><rect x="17.400" y="21.500" width="3.600" height="4" fill="#104862"/></svg>
<span class="t" style="left:7.55px;top:184.24px;font-size:10.60px;line-height:12.72px;color:#5a5a5a;transform:scaleX(0.9000);">1</span>
<span class="t" style="left:7.55px;top:199.47px;font-size:10.60px;line-height:12.72px;color:#5a5a5a;transform:scaleX(0.9000);">2</span>
<span class="t" style="left:7.55px;top:214.72px;font-size:10.60px;line-height:12.72px;color:#5a5a5a;transform:scaleX(0.9000);">3</span>
<span class="t" style="left:7.55px;top:229.97px;font-size:10.60px;line-height:12.72px;color:#5a5a5a;transform:scaleX(0.9000);">4</span>
<span class="t" style="left:7.55px;top:245.22px;font-size:10.60px;line-height:12.72px;color:#5a5a5a;transform:scaleX(0.9000);">5</span>
<span class="t" style="left:7.55px;top:260.46px;font-size:10.60px;line-height:12.72px;color:#5a5a5a;transform:scaleX(0.9000);">6</span>
<span class="t" style="left:7.55px;top:275.71px;font-size:10.60px;line-height:12.72px;color:#5a5a5a;transform:scaleX(0.9000);">7</span>
<span class="t" style="left:7.55px;top:290.96px;font-size:10.60px;line-height:12.72px;color:#5a5a5a;transform:scaleX(0.9000);">8</span>
<span class="t" style="left:7.55px;top:306.21px;font-size:10.60px;line-height:12.72px;color:#5a5a5a;transform:scaleX(0.9000);">9</span>
<span class="t" style="left:4.89px;top:321.46px;font-size:10.60px;line-height:12.72px;color:#5a5a5a;transform:scaleX(0.9000);">10</span>
<span class="t" style="left:5.25px;top:336.71px;font-size:10.60px;line-height:12.72px;color:#5a5a5a;transform:scaleX(0.9000);">11</span>
<span class="t" style="left:4.89px;top:351.96px;font-size:10.60px;line-height:12.72px;color:#5a5a5a;transform:scaleX(0.9000);">12</span>
<span class="t" style="left:4.89px;top:367.21px;font-size:10.60px;line-height:12.72px;color:#5a5a5a;transform:scaleX(0.9000);">13</span>
<span class="t" style="left:4.89px;top:382.46px;font-size:10.60px;line-height:12.72px;color:#5a5a5a;transform:scaleX(0.9000);">14</span>
<span class="t" style="left:4.89px;top:397.71px;font-size:10.60px;line-height:12.72px;color:#5a5a5a;transform:scaleX(0.9000);">15</span>
<span class="t" style="left:45.12px;top:201.44px;font-size:8.30px;line-height:9.96px;color:#2e2e2e;transform:scaleX(0.8800);-webkit-text-stroke:0.22px #2e2e2e;">1</span>
<span class="t" style="left:96.81px;top:201.44px;font-size:8.30px;line-height:9.96px;color:#2e2e2e;transform:scaleX(1.0000);-webkit-text-stroke:0.22px #2e2e2e;">Energy Production</span>
<span class="t" style="left:218.11px;top:201.44px;font-size:8.30px;line-height:9.96px;color:#2e2e2e;transform:scaleX(1.0000);-webkit-text-stroke:0.22px #2e2e2e;">Total Energy Produced</span>
<span class="t" style="left:361.05px;top:201.44px;font-size:8.30px;line-height:9.96px;color:#2e2e2e;transform:scaleX(1.0000);-webkit-text-stroke:0.22px #2e2e2e;">kWh</span>
<span class="t" style="left:444.00px;top:201.44px;font-size:8.30px;line-height:9.96px;color:#2e2e2e;transform:scaleX(1.0000);-webkit-text-stroke:0.22px #2e2e2e;">Sum of daily/weekly/monthly energy</span>
<span class="t" style="left:685.11px;top:201.44px;font-size:8.30px;line-height:9.96px;color:#2e2e2e;transform:scaleX(0.9900);-webkit-text-stroke:0.22px #2e2e2e;">Total energy generated by the solar panels in a given period.</span>
<span class="t" style="left:990.30px;top:201.44px;font-size:8.30px;line-height:9.96px;color:#2e2e2e;transform:scaleX(0.8800);-webkit-text-stroke:0.22px #2e2e2e;">UTB</span>
<span class="t" style="left:45.12px;top:216.69px;font-size:8.30px;line-height:9.96px;color:#2e2e2e;transform:scaleX(0.8800);-webkit-text-stroke:0.22px #2e2e2e;">2</span>
<span class="t" style="left:96.81px;top:216.69px;font-size:8.30px;line-height:9.96px;color:#2e2e2e;transform:scaleX(1.0000);-webkit-text-stroke:0.22px #2e2e2e;">Energy Production</span>
<span class="t" style="left:224.11px;top:216.69px;font-size:8.30px;line-height:9.96px;color:#2e2e2e;transform:scaleX(1.0000);-webkit-text-stroke:0.22px #2e2e2e;">Peak Power Output</span>
<span class="t" style="left:363.36px;top:216.69px;font-size:8.30px;line-height:9.96px;color:#2e2e2e;transform:scaleX(1.0000);-webkit-text-stroke:0.22px #2e2e2e;">kW</span>
<span class="t" style="left:461.99px;top:216.69px;font-size:8.30px;line-height:9.96px;color:#2e2e2e;transform:scaleX(1.0000);-webkit-text-stroke:0.22px #2e2e2e;">Maximum value in dataset</span>
<span class="t" style="left:685.07px;top:216.69px;font-size:8.30px;line-height:9.96px;color:#2e2e2e;transform:scaleX(1.0050);-webkit-text-stroke:0.22px #2e2e2e;">The highest power output achieved during a specific period.</span>
<span class="t" style="left:990.30px;top:216.69px;font-size:8.30px;line-height:9.96px;color:#2e2e2e;transform:scaleX(0.8800);-webkit-text-stroke:0.22px #2e2e2e;">UTB</span>
<span class="t" style="left:45.12px;top:231.94px;font-size:8.30px;line-height:9.96px;color:#2e2e2e;transform:scaleX(0.8800);-webkit-text-stroke:0.22px #2e2e2e;">3</span>
<span class="t" style="left:96.81px;top:231.94px;font-size:8.30px;line-height:9.96px;color:#2e2e2e;transform:scaleX(1.0000);-webkit-text-stroke:0.22px #2e2e2e;">Energy Production</span>
<span class="t" style="left:231.04px;top:231.94px;font-size:8.30px;line-height:9.96px;color:#2e2e2e;transform:scaleX(1.0000);-webkit-text-stroke:0.22px #2e2e2e;">Capacity Factor</span>
<span class="t" style="left:363.41px;top:231.94px;font-size:8.30px;line-height:9.96px;color:#2e2e2e;transform:scaleX(0.9200);-webkit-text-stroke:0.22px #2e2e2e;">(%)</span>
<span class="t" style="left:411.26px;top:231.94px;font-size:8.30px;line-height:9.96px;color:#2e2e2e;transform:scaleX(0.9630);-webkit-text-stroke:0.22px #2e2e2e;">(Actual Energy Produced ÷ Max Possible Energy) × 100</span>
<span class="t" style="left:715.97px;top:231.94px;font-size:8.30px;line-height:9.96px;color:#2e2e2e;transform:scaleX(0.9880);-webkit-text-stroke:0.22px #2e2e2e;">Efficiency of the solar system over a period.</span>
<span class="t" style="left:990.30px;top:231.94px;font-size:8.30px;line-height:9.96px;color:#2e2e2e;transform:scaleX(0.8800);-webkit-text-stroke:0.22px #2e2e2e;">UTB</span>
<span class="t" style="left:45.12px;top:247.19px;font-size:8.30px;line-height:9.96px;color:#2e2e2e;transform:scaleX(0.8800);-webkit-text-stroke:0.22px #2e2e2e;">4</span>
<span class="t" style="left:96.81px;top:247.19px;font-size:8.30px;line-height:9.96px;color:#2e2e2e;transform:scaleX(1.0000);-webkit-text-stroke:0.22px #2e2e2e;">Energy Production</span>
<span class="t" style="left:225.81px;top:247.19px;font-size:8.30px;line-height:9.96px;color:#2e2e2e;transform:scaleX(1.0000);-webkit-text-stroke:0.22px #2e2e2e;">System Availability</span>
<span class="t" style="left:363.41px;top:247.19px;font-size:8.30px;line-height:9.96px;color:#2e2e2e;transform:scaleX(0.9200);-webkit-text-stroke:0.22px #2e2e2e;">(%)</span>
<span class="t" style="left:446.74px;top:247.19px;font-size:8.30px;line-height:9.96px;color:#2e2e2e;transform:scaleX(0.9720);-webkit-text-stroke:0.22px #2e2e2e;">(Uptime Hours ÷ Total Hours) × 100</span>
<span class="t" style="left:696.94px;top:247.19px;font-size:8.30px;line-height:9.96px;color:#2e2e2e;transform:scaleX(1.0070);-webkit-text-stroke:0.22px #2e2e2e;">Percentage of time the solar system was operational.</span>
<span class="t" style="left:990.30px;top:247.19px;font-size:8.30px;line-height:9.96px;color:#2e2e2e;transform:scaleX(0.8800);-webkit-text-stroke:0.22px #2e2e2e;">UTB</span>
<span class="t" style="left:45.12px;top:262.44px;font-size:8.30px;line-height:9.96px;color:#2e2e2e;transform:scaleX(0.8800);-webkit-text-stroke:0.22px #2e2e2e;">5</span>
<span class="t" style="left:98.96px;top:262.44px;font-size:8.30px;line-height:9.96px;color:#2e2e2e;transform:scaleX(1.0000);-webkit-text-stroke:0.22px #2e2e2e;">Energy Efficiency</span>
<span class="t" style="left:215.82px;top:262.44px;font-size:8.30px;line-height:9.96px;color:#2e2e2e;transform:scaleX(1.0000);-webkit-text-stroke:0.22px #2e2e2e;">Performance Ratio (PR)</span>
<span class="t" style="left:363.41px;top:262.44px;font-size:8.30px;line-height:9.96px;color:#2e2e2e;transform:scaleX(0.9200);-webkit-text-stroke:0.22px #2e2e2e;">(%)</span>
<span class="t" style="left:432.98px;top:262.44px;font-size:8.30px;line-height:9.96px;color:#2e2e2e;transform:scaleX(0.9340);-webkit-text-stroke:0.22px #2e2e2e;">(Energy Produced ÷ Expected Energy) × 100</span>
<span class="t" style="left:719.14px;top:262.44px;font-size:8.30px;line-height:9.96px;color:#2e2e2e;transform:scaleX(0.9900);-webkit-text-stroke:0.22px #2e2e2e;">Ratio of actual to expected energy output.</span>
<span class="t" style="left:990.30px;top:262.44px;font-size:8.30px;line-height:9.96px;color:#2e2e2e;transform:scaleX(0.8800);-webkit-text-stroke:0.22px #2e2e2e;">UTB</span>
<span class="t" style="left:45.12px;top:277.69px;font-size:8.30px;line-height:9.96px;color:#2e2e2e;transform:scaleX(0.8800);-webkit-text-stroke:0.22px #2e2e2e;">6</span>
<span class="t" style="left:98.96px;top:277.69px;font-size:8.30px;line-height:9.96px;color:#2e2e2e;transform:scaleX(1.0000);-webkit-text-stroke:0.22px #2e2e2e;">Energy Efficiency</span>
<span class="t" style="left:227.19px;top:277.69px;font-size:8.30px;line-height:9.96px;color:#2e2e2e;transform:scaleX(1.0000);-webkit-text-stroke:0.22px #2e2e2e;">Inverter Efficiency</span>
<span class="t" style="left:363.41px;top:277.69px;font-size:8.30px;line-height:9.96px;color:#2e2e2e;transform:scaleX(0.9200);-webkit-text-stroke:0.22px #2e2e2e;">(%)</span>
<span class="t" style="left:433.64px;top:277.69px;font-size:8.30px;line-height:9.96px;color:#2e2e2e;transform:scaleX(0.9500);-webkit-text-stroke:0.22px #2e2e2e;">(AC Power Output ÷ DC Power Input) × 100</span>
<span class="t" style="left:713.61px;top:277.69px;font-size:8.30px;line-height:9.96px;color:#2e2e2e;transform:scaleX(0.9700);-webkit-text-stroke:0.22px #2e2e2e;">Efficiency of the inverter converting DC to AC.</span>
<span class="t" style="left:990.30px;top:277.69px;font-size:8.30px;line-height:9.96px;color:#2e2e2e;transform:scaleX(0.8800);-webkit-text-stroke:0.22px #2e2e2e;">UTB</span>
<span class="t" style="left:45.12px;top:292.94px;font-size:8.30px;line-height:9.96px;color:#2e2e2e;transform:scaleX(0.8800);-webkit-text-stroke:0.22px #2e2e2e;">7</span>
<span class="t" style="left:79.51px;top:292.94px;font-size:8.30px;line-height:9.96px;color:#2e2e2e;transform:scaleX(1.0000);-webkit-text-stroke:0.22px #2e2e2e;">Maintenance and Downtime</span>
<span class="t" style="left:241.65px;top:292.94px;font-size:8.30px;line-height:9.96px;color:#2e2e2e;transform:scaleX(1.0000);-webkit-text-stroke:0.22px #2e2e2e;">Downtime</span>
<span class="t" style="left:358.28px;top:292.94px;font-size:8.30px;line-height:9.96px;color:#2e2e2e;transform:scaleX(1.0000);-webkit-text-stroke:0.22px #2e2e2e;">Hours</span>
<span class="t" style="left:478.14px;top:292.94px;font-size:8.30px;line-height:9.96px;color:#2e2e2e;transform:scaleX(1.0000);-webkit-text-stroke:0.22px #2e2e2e;">Sum of downtime</span>
<span class="t" style="left:715.20px;top:292.94px;font-size:8.30px;line-height:9.96px;color:#2e2e2e;transform:scaleX(1.0170);-webkit-text-stroke:0.22px #2e2e2e;">Total time the system was non-operational.</span>
<span class="t" style="left:991.17px;top:292.94px;font-size:8.30px;line-height:9.96px;color:#2e2e2e;transform:scaleX(0.8800);-webkit-text-stroke:0.22px #2e2e2e;">LTB</span>
<span class="t" style="left:45.12px;top:308.19px;font-size:8.30px;line-height:9.96px;color:#2e2e2e;transform:scaleX(0.8800);-webkit-text-stroke:0.22px #2e2e2e;">8</span>
<span class="t" style="left:79.51px;top:308.19px;font-size:8.30px;line-height:9.96px;color:#2e2e2e;transform:scaleX(1.0000);-webkit-text-stroke:0.22px #2e2e2e;">Maintenance and Downtime</span>
<span class="t" style="left:226.65px;top:308.19px;font-size:8.30px;line-height:9.96px;color:#2e2e2e;transform:scaleX(1.0000);-webkit-text-stroke:0.22px #2e2e2e;">Maintenance Cost</span>
<span class="t" style="left:355.05px;top:308.19px;font-size:8.30px;line-height:9.96px;color:#2e2e2e;transform:scaleX(1.0000);-webkit-text-stroke:0.22px #2e2e2e;">(e.g., $)</span>
<span class="t" style="left:455.99px;top:308.19px;font-size:8.30px;line-height:9.96px;color:#2e2e2e;transform:scaleX(1.0000);-webkit-text-stroke:0.22px #2e2e2e;">Sum of all maintenance costs</span>
<span class="t" style="left:719.48px;top:308.19px;font-size:8.30px;line-height:9.96px;color:#2e2e2e;transform:scaleX(1.0100);-webkit-text-stroke:0.22px #2e2e2e;">Total cost spent on system maintenance.</span>
<span class="t" style="left:991.17px;top:308.19px;font-size:8.30px;line-height:9.96px;color:#2e2e2e;transform:scaleX(0.8800);-webkit-text-stroke:0.22px #2e2e2e;">LTB</span>
<span class="t" style="left:45.12px;top:323.44px;font-size:8.30px;line-height:9.96px;color:#2e2e2e;transform:scaleX(0.8800);-webkit-text-stroke:0.22px #2e2e2e;">9</span>
<span class="t" style="left:114.34px;top:323.44px;font-size:8.30px;line-height:9.96px;color:#2e2e2e;transform:scaleX(1.0000);-webkit-text-stroke:0.22px #2e2e2e;">Financial</span>
<span class="t" style="left:222.72px;top:323.44px;font-size:8.30px;line-height:9.96px;color:#2e2e2e;transform:scaleX(1.0000);-webkit-text-stroke:0.22px #2e2e2e;">Revenue Generated</span>
<span class="t" style="left:356.43px;top:323.44px;font-size:8.30px;line-height:9.96px;color:#2e2e2e;transform:scaleX(1.0000);-webkit-text-stroke:0.22px #2e2e2e;">e.g., $)</span>
<span class="t" style="left:417.23px;top:323.44px;font-size:8.30px;line-height:9.96px;color:#2e2e2e;transform:scaleX(1.0000);-webkit-text-stroke:0.22px #2e2e2e;">Sum of revenue generated from energy production</span>
<span class="t" style="left:726.54px;top:323.44px;font-size:8.30px;line-height:9.96px;color:#2e2e2e;transform:scaleX(1.0000);-webkit-text-stroke:0.22px #2e2e2e;">Income from selling or saving energy.</span>
<span class="t" style="left:990.30px;top:323.44px;font-size:8.30px;line-height:9.96px;color:#2e2e2e;transform:scaleX(0.8800);-webkit-text-stroke:0.22px #2e2e2e;">UTB</span>
<span class="t" style="left:43.09px;top:338.69px;font-size:8.30px;line-height:9.96px;color:#2e2e2e;transform:scaleX(0.8800);-webkit-text-stroke:0.22px #2e2e2e;">10</span>
<span class="t" style="left:114.34px;top:338.69px;font-size:8.30px;line-height:9.96px;color:#2e2e2e;transform:scaleX(1.0000);-webkit-text-stroke:0.22px #2e2e2e;">Financial</span>
<span class="t" style="left:209.13px;top:338.69px;font-size:8.30px;line-height:9.96px;color:#2e2e2e;transform:scaleX(1.0000);-webkit-text-stroke:0.22px #2e2e2e;">Return on Investment (ROI)</span>
<span class="t" style="left:363.41px;top:338.69px;font-size:8.30px;line-height:9.96px;color:#2e2e2e;transform:scaleX(0.9200);-webkit-text-stroke:0.22px #2e2e2e;">(%)</span>
<span class="t" style="left:445.77px;top:338.69px;font-size:8.30px;line-height:9.96px;color:#2e2e2e;transform:scaleX(0.9720);-webkit-text-stroke:0.22px #2e2e2e;">(Net Profit ÷ Investment Cost) × 100</span>
<span class="t" style="left:678.14px;top:338.69px;font-size:8.30px;line-height:9.96px;color:#2e2e2e;transform:scaleX(0.9950);-webkit-text-stroke:0.22px #2e2e2e;">Percentage of return on the total investment in the solar system.</span>
<span class="t" style="left:990.30px;top:338.69px;font-size:8.30px;line-height:9.96px;color:#2e2e2e;transform:scaleX(0.8800);-webkit-text-stroke:0.22px #2e2e2e;">UTB</span>
<span class="t" style="left:43.36px;top:353.94px;font-size:8.30px;line-height:9.96px;color:#2e2e2e;transform:scaleX(0.8800);-webkit-text-stroke:0.22px #2e2e2e;">11</span>
<span class="t" style="left:90.81px;top:353.94px;font-size:8.30px;line-height:9.96px;color:#2e2e2e;transform:scaleX(1.0000);-webkit-text-stroke:0.22px #2e2e2e;">Environmental Impact</span>
<span class="t" style="left:234.34px;top:353.94px;font-size:8.30px;line-height:9.96px;color:#2e2e2e;transform:scaleX(1.0000);-webkit-text-stroke:0.22px #2e2e2e;">Carbon Offset</span>
<span class="t" style="left:348.21px;top:353.94px;font-size:8.30px;line-height:9.96px;color:#2e2e2e;transform:scaleX(1.0000);-webkit-text-stroke:0.22px #2e2e2e;">Metric Tons</span>
<span class="t" style="left:452.07px;top:353.94px;font-size:8.30px;line-height:9.96px;color:#2e2e2e;transform:scaleX(1.0000);-webkit-text-stroke:0.22px #2e2e2e;">Sum of CO2 emissions avoided</span>
<span class="t" style="left:685.20px;top:353.94px;font-size:8.30px;line-height:9.96px;color:#2e2e2e;transform:scaleX(0.9880);-webkit-text-stroke:0.22px #2e2e2e;">Total amount of CO2 emissions saved by using solar energy.</span>
<span class="t" style="left:990.30px;top:353.94px;font-size:8.30px;line-height:9.96px;color:#2e2e2e;transform:scaleX(0.8800);-webkit-text-stroke:0.22px #2e2e2e;">UTB</span>
<span class="t" style="left:43.09px;top:369.19px;font-size:8.30px;line-height:9.96px;color:#2e2e2e;transform:scaleX(0.8800);-webkit-text-stroke:0.22px #2e2e2e;">12</span>
<span class="t" style="left:90.81px;top:369.19px;font-size:8.30px;line-height:9.96px;color:#2e2e2e;transform:scaleX(1.0000);-webkit-text-stroke:0.22px #2e2e2e;">Environmental Impact</span>
<span class="t" style="left:207.74px;top:369.19px;font-size:8.30px;line-height:9.96px;color:#2e2e2e;transform:scaleX(1.0000);-webkit-text-stroke:0.22px #2e2e2e;">Energy Payback Time (EPT)</span>
<span class="t" style="left:358.89px;top:369.19px;font-size:8.30px;line-height:9.96px;color:#2e2e2e;transform:scaleX(1.0000);-webkit-text-stroke:0.22px #2e2e2e;">Years</span>
<span class="t" style="left:434.89px;top:369.19px;font-size:8.30px;line-height:9.96px;color:#2e2e2e;transform:scaleX(0.9720);-webkit-text-stroke:0.22px #2e2e2e;">Investment Cost ÷ Annual Energy Savings</span>
<span class="t" style="left:698.45px;top:369.19px;font-size:8.30px;line-height:9.96px;color:#2e2e2e;transform:scaleX(1.0100);-webkit-text-stroke:0.22px #2e2e2e;">Time taken for the system to pay back its initial cost.</span>
<span class="t" style="left:991.17px;top:369.19px;font-size:8.30px;line-height:9.96px;color:#2e2e2e;transform:scaleX(0.8800);-webkit-text-stroke:0.22px #2e2e2e;">LTB</span>
</div></body></html>
